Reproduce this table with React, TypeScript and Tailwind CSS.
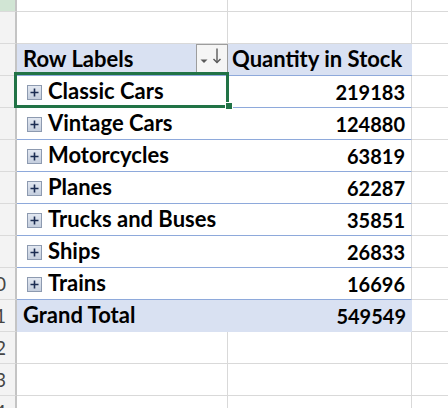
import React from 'react';

const ITEMS: [string, number][] = [
  ['Classic Cars', 219183],
  ['Vintage Cars', 124880],
  ['Motorcycles', 63819],
  ['Planes', 62287],
  ['Trucks and Buses', 35851],
  ['Ships', 26833],
  ['Trains', 16696],
];

// row header strip on the left, only the last digit of two-digit numbers shows
const RowNum = ({ n, green = false }: { n: number; green?: boolean }) => (
  <div
    className={`w-[17px] h-full shrink-0 overflow-hidden flex justify-end pr-[9px] pt-[5px] border-r-2 border-b border-r-[#c4c4c4] border-b-[#dadada] text-[19px] leading-[22px] text-[#454545] font-normal ${
      green ? 'bg-[#d1e5d4]' : 'bg-[#f3f3f3]'
    }`}
  >
    {n >= 10 ? <span className="shrink-0">{n}</span> : null}
  </div>
);

const PlainRow = ({ n, green = false }: { n: number; green?: boolean }) => (
  <div className="flex h-[32px]">
    <RowNum n={n} green={green} />
    <div className="w-[211px] shrink-0 border-r border-b border-[#d9d9d9]" />
    <div className="w-[184px] shrink-0 border-r border-b border-[#d9d9d9]" />
    <div className="flex-1 border-b border-[#d9d9d9]" />
  </div>
);

const PlusBox = () => (
  <svg width="15" height="15" viewBox="0 0 15 15" className="mt-[9px] shrink-0">
    <defs>
      <linearGradient id="pb" x1="0" y1="0" x2="0" y2="1">
        <stop offset="0" stopColor="#e4e9f2" />
        <stop offset="1" stopColor="#c3cddd" />
      </linearGradient>
    </defs>
    <rect x="0.5" y="0.5" width="14" height="14" fill="url(#pb)" stroke="#8d9ab0" />
    <path d="M3.5 7.5h8M7.5 3.5v8" stroke="#1b2c52" strokeWidth="1.6" />
  </svg>
);

const FilterButton = () => (
  <div className="w-[32px] h-[31px] shrink-0 border border-b-0 border-[#9d9d9d] bg-[#f5f5f5]">
    <svg width="30" height="30" viewBox="0 0 30 30">
      <path d="M3.5 14.5h7l-3.5 3.5z" fill="#5a5a5a" />
      <path d="M20 3.5v14" stroke="#5a5a5a" strokeWidth="1.4" />
      <path d="M16.5 14L20 17.6l3.5-3.6" stroke="#5a5a5a" strokeWidth="1.4" fill="none" />
    </svg>
  </div>
);

export default function App() {
  return (
    <div className="relative w-[448px] h-[408px] overflow-hidden bg-white text-black font-['Lato',sans-serif]">
      <div className="-mt-[20px] flex flex-col">
        <PlainRow n={1} green />
        <PlainRow n={2} />

        {/* header */}
        <div className="flex h-[32px]">
          <RowNum n={3} />
          <div className="w-[211px] shrink-0 flex justify-between bg-[#d9e1f2] border-b border-[#8ea9db]">
            <span className="pl-[6px] pt-[3px] text-[22px] leading-[24px] font-bold whitespace-nowrap">Row Labels</span>
            <FilterButton />
          </div>
          <div className="w-[184px] shrink-0 pl-[4px] pt-[3px] text-[22px] leading-[24px] font-bold whitespace-nowrap bg-[#d9e1f2] border-b border-[#8ea9db]">
            Quantity in Stock
          </div>
          <div className="flex-1 border-b border-[#d9d9d9]" />
        </div>

        {ITEMS.map(([label, qty], i) => (
          <div key={label} className="flex h-[32px]">
            <RowNum n={i + 4} />
            <div className="w-[211px] shrink-0 flex items-start pl-[10px] border-b border-[#8ea9db]">
              <PlusBox />
              <span className="ml-[6px] pt-[3px] text-[22px] leading-[24px] font-bold whitespace-nowrap">{label}</span>
            </div>
            <div className="w-[184px] shrink-0 text-right pr-[6px] pt-[4px] text-[20px] leading-[24px] font-bold border-r border-b border-r-[#d9d9d9] border-b-[#8ea9db]">
              {qty}
            </div>
            <div className="flex-1 border-b border-[#d9d9d9]" />
          </div>
        ))}

        {/* grand total */}
        <div className="flex h-[32px]">
          <RowNum n={11} />
          <div className="w-[211px] shrink-0 pl-[6px] pt-[3px] text-[22px] leading-[24px] font-bold bg-[#d9e1f2]">Grand Total</div>
          <div className="w-[184px] shrink-0 text-right pr-[6px] pt-[4px] text-[20px] leading-[24px] font-bold bg-[#d9e1f2]">549549</div>
          <div className="flex-1 border-b border-[#d9d9d9]" />
        </div>

        <PlainRow n={12} />
        <PlainRow n={13} />
        <PlainRow n={14} />
      </div>

      {/* active cell */}
      <div className="absolute left-[14px] top-[72px] w-[215px] h-[36px] border-[3px] border-[#217346]" />
      <div className="absolute left-[225px] top-[102px] w-[8px] h-[8px] bg-[#217346] border border-white" />
    </div>
  );
}
